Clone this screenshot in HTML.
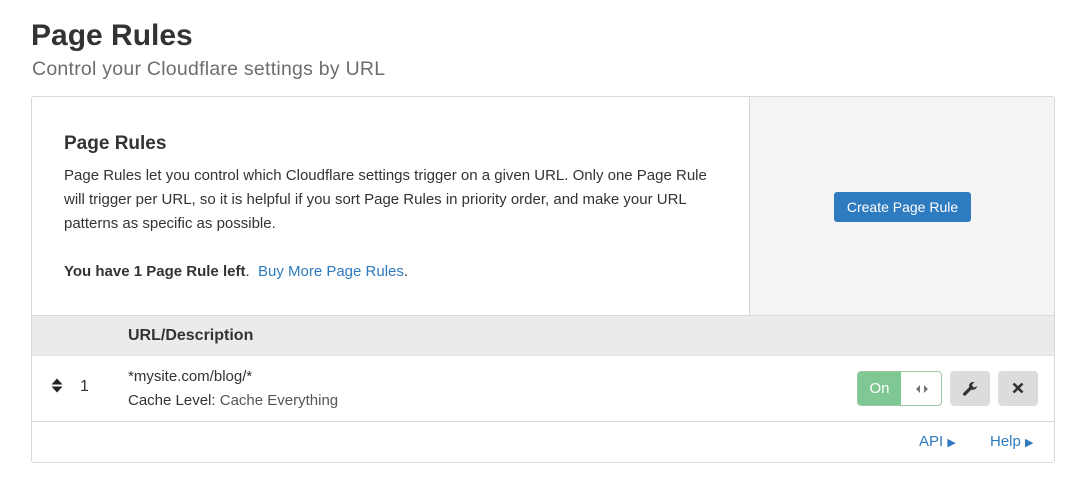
<!DOCTYPE html>
<html><head><meta charset="utf-8"><style>
*{box-sizing:border-box;margin:0;padding:0}
body{width:1082px;height:487px;background:#fff;font-family:"Liberation Sans",sans-serif;color:#333;position:relative;overflow:hidden}
.abs{position:absolute}
h1{position:absolute;left:31px;top:19px;font-size:30px;font-weight:bold;color:#333}
.sub{left:32px;top:58px;font-size:19.5px;color:#6d6d6d;letter-spacing:0.25px}
.card{left:31px;top:96px;width:1024px;height:367px;border:1px solid #d9d9d9;border-radius:3px;overflow:hidden}
.side{left:717px;top:0;width:306px;height:218px;background:#f4f4f4;border-left:1px solid #d9d9d9}
.btn{left:84px;top:95px;width:137px;height:30px;background:#2f7bbf;border-radius:3px;color:#fff;font-size:14px;text-align:center;line-height:30px}
.h2{left:32px;top:36px;font-size:19px;font-weight:bold;color:#333}
.p{left:32px;top:67px;width:660px;font-size:15px;line-height:24px;color:#333}
.hdr{left:0;top:218px;width:1024px;height:41px;background:#ebebeb;border-top:1px solid #d9d9d9;border-bottom:1px solid #e2e2e2}
.a{color:#2f7bbf}
.row{left:0;top:259px;width:1024px;height:66px;border-bottom:1px solid #d9d9d9}
.tog{left:825px;top:15px;width:85px;height:35px;border:1px solid #9cc9a6;border-radius:4px;overflow:hidden;background:#fff}
.on{position:absolute;left:0;top:0;width:43px;height:33px;background:#7fc793;color:#fff;font-size:15px;text-align:center;line-height:33px}
.ib{width:40px;height:35px;background:#dcdcdc;border-radius:4px;top:15px}
</style></head><body>
<h1>Page Rules</h1>
<div class="abs sub">Control your Cloudflare settings by URL</div>
<div class="abs card">
 <div class="abs side"><div class="abs btn">Create Page Rule</div></div>
 <div class="abs h2">Page Rules</div>
 <div class="abs p">Page Rules let you control which Cloudflare settings trigger on a given URL. Only one Page Rule will trigger per URL, so it is helpful if you sort Page Rules in priority order, and make your URL patterns as specific as possible.<br><br><b>You have 1 Page Rule left</b>.&nbsp; <span class="a">Buy More Page Rules</span>.</div>
 <div class="abs hdr"><div class="abs" style="left:96px;top:11px;font-size:16px;font-weight:bold;color:#333">URL/Description</div></div>
 <div class="abs row">
  <svg class="abs" style="left:19px;top:21px" width="12" height="17" viewBox="0 0 12 17"><path d="M0.5 7.5L6 1.5L11.5 7.5Z M0.5 9.5L6 15.5L11.5 9.5Z" fill="#222"/></svg>
  <div class="abs" style="left:48px;top:22px;font-size:16px">1</div>
  <div class="abs" style="left:96px;top:9px;font-size:15px;line-height:24px;color:#333">*mysite.com/blog/*<br>Cache Level: <span style="color:#555">Cache Everything</span></div>
  <div class="abs tog"><div class="on">On</div>
   <svg class="abs" style="left:57px;top:12px" width="14" height="10" viewBox="0 0 14 10"><path d="M5 1L1 5L5 9Z M9 1L13 5L9 9Z" fill="#777"/></svg></div>
  <div class="abs ib" style="left:918px"><svg class="abs" style="left:12px;top:10px" width="16" height="16" viewBox="0 0 16 16"><path d="M11 1a4 4 0 0 0-3.8 5.2L1.5 11.9a1.6 1.6 0 0 0 2.3 2.3L9.5 8.5A4 4 0 0 0 15 5l-2.5 1.5-2-1-.3-2.2L12.6 1.1A4 4 0 0 0 11 1z" fill="#333"/></svg></div>
  <div class="abs ib" style="left:966px"><svg class="abs" style="left:14px;top:11px" width="12" height="12" viewBox="0 0 12 12"><path d="M1.5 1.5L10.5 10.5M10.5 1.5L1.5 10.5" stroke="#333" stroke-width="2.6"/></svg></div>
 </div>
 <div class="abs a" style="left:887px;top:336px;font-size:15px">API <span style="font-size:11px">&#9654;</span></div>
 <div class="abs a" style="left:958px;top:336px;font-size:15px">Help <span style="font-size:11px">&#9654;</span></div>
</div>
</body></html>
